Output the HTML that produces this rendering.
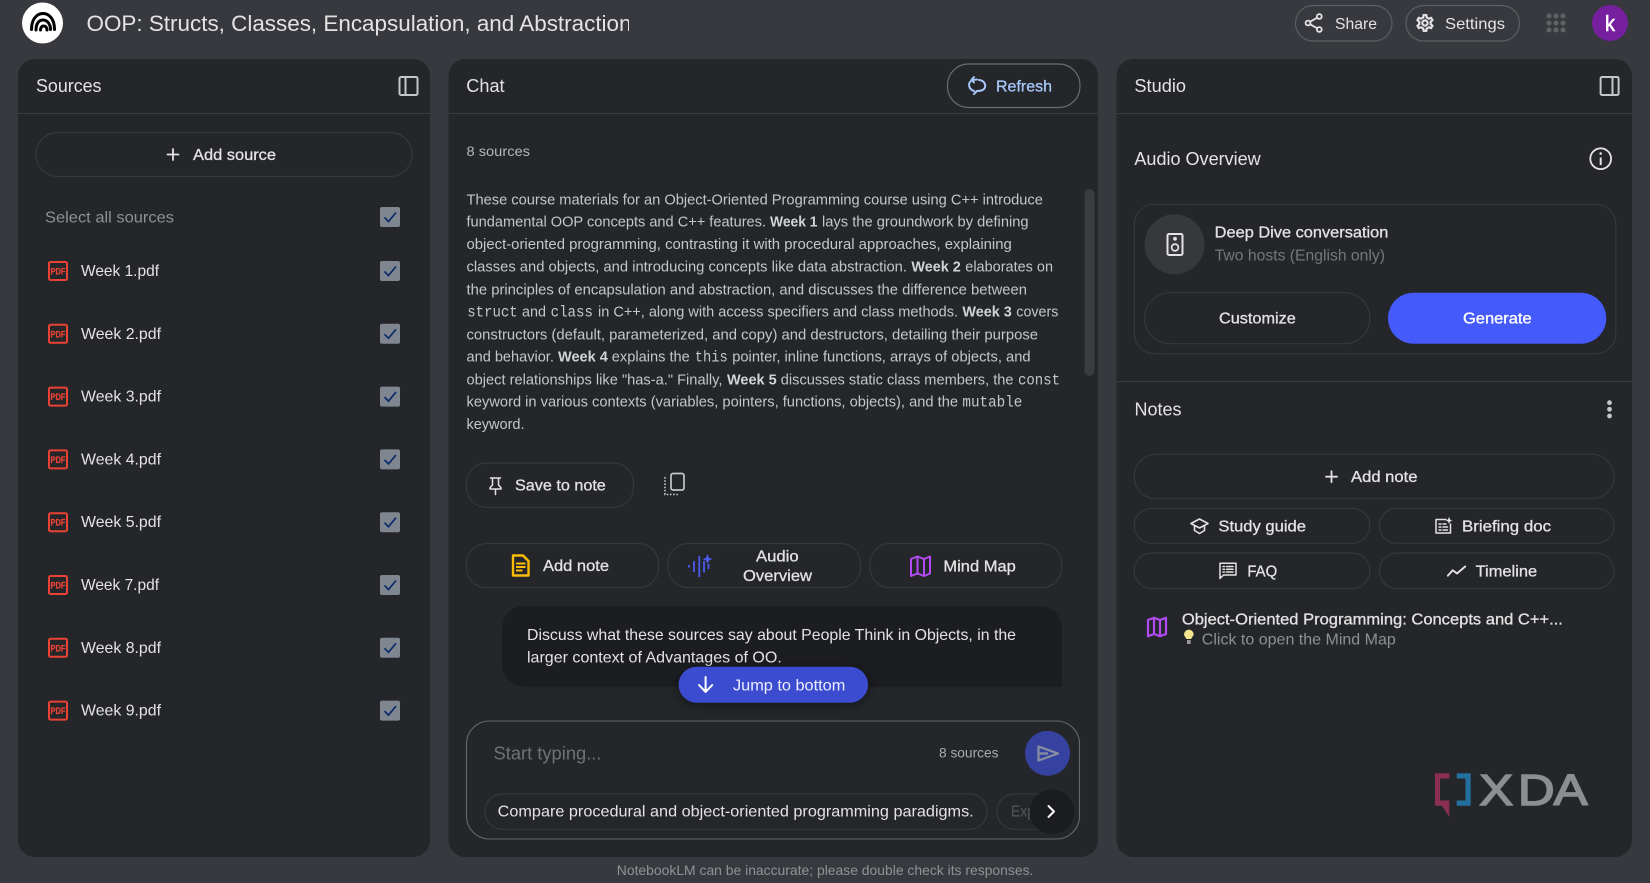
<!DOCTYPE html>
<html lang="en"><head><meta charset="utf-8"><title>NotebookLM</title>
<style>
html,body{margin:0;padding:0;background:#37393e;width:1650px;height:883px;overflow:hidden}
svg{display:block}
text{font-family:"Liberation Sans",sans-serif;fill:#e3e3e3;font-size:16px;white-space:pre}
.m{stroke:#e3e3e3;stroke-width:.3}
.h{font-size:18px}
.b{fill:#c4c6c9;font-size:15px}
.bb{fill:#d2d4d6;font-size:15px;font-weight:700}
.mo{fill:#c4c6c9;font-size:15.5px;font-family:"Liberation Mono",monospace}
.p{fill:none;stroke:#35373b;stroke-width:1.2}
.i{fill:none;stroke:#e3e3e3;stroke-width:1.8;stroke-linecap:round;stroke-linejoin:round}
.t{fill:none;stroke:#c4c7c5;stroke-width:2}
.pdf{fill:none;stroke:#ea4335;stroke-width:2}
.pt{fill:#ea4335;font-size:9.5px;font-weight:700;stroke:#ea4335;stroke-width:.2}
.c{fill:#80868f}
.k{fill:none;stroke:#0b2a6b;stroke-width:1.7}
.f{font-size:16px}
</style></head><body>
<svg xmlns="http://www.w3.org/2000/svg" width="1650" height="883" viewBox="0 0 1650 883">
<defs><clipPath id="tc"><rect x="80" y="0" width="549" height="50"/></clipPath></defs>
<rect width="1650" height="883" fill="#37393e"/>

<!-- Top bar -->
<circle cx="42.5" cy="23" r="20.5" fill="#fff"/>
<g fill="none" stroke="#000" stroke-width="3" stroke-linecap="round">
<path d="M31.5 29.5C31.5 19.5 36.5 13.5 43 13.5C49.5 13.5 54.5 19.5 54.5 29.5"/>
<path d="M36 30C36 23.5 39 20 43 20C47.5 20 50.5 24.5 50.5 29.5"/>
<path d="M40.5 30C40.5 27.5 42 26 43.5 26C45.5 26 47 27.5 47 30"/>
</g>
<g clip-path="url(#tc)"><text x="86.5" y="31" font-size="22" style="font-size:22px" textLength="545" lengthAdjust="spacingAndGlyphs">OOP: Structs, Classes, Encapsulation, and Abstraction</text></g>

<rect x="1295.5" y="5.5" width="96.5" height="35.5" rx="17.7" fill="none" stroke="#5c5e62" stroke-width="1.2"/>
<g class="i"><circle cx="1319.3" cy="16.5" r="2.4"/><circle cx="1308" cy="23" r="2.4"/><circle cx="1319.3" cy="29.5" r="2.4"/><path d="M1310 21.8L1317.2 17.7M1310 24.2L1317.2 28.3"/></g>
<text x="1335" y="29" textLength="42" lengthAdjust="spacingAndGlyphs">Share</text>
<rect x="1406" y="5.5" width="113.5" height="35.5" rx="17.7" fill="none" stroke="#5c5e62" stroke-width="1.2"/>
<path transform="translate(1414.4 12.4) scale(.88)" fill="#e3e3e3" stroke="#e3e3e3" stroke-width=".5" d="M19.43 12.98c.04-.32.07-.64.07-.98 0-.34-.03-.66-.07-.98l2.11-1.65c.19-.15.24-.42.12-.64l-2-3.46c-.09-.16-.26-.25-.44-.25-.06 0-.12.01-.17.03l-2.49 1c-.52-.4-1.08-.73-1.69-.98l-.38-2.65C14.46 2.18 14.25 2 14 2h-4c-.25 0-.46.18-.49.42l-.38 2.65c-.61.25-1.17.59-1.69.98l-2.49-1c-.06-.02-.12-.03-.18-.03-.17 0-.34.09-.43.25l-2 3.46c-.13.22-.07.49.12.64l2.11 1.65c-.04.32-.07.65-.07.98 0 .33.03.66.07.98l-2.11 1.65c-.19.15-.24.42-.12.64l2 3.46c.09.16.26.25.44.25.06 0 .12-.01.17-.03l2.49-1c.52.4 1.08.73 1.69.98l.38 2.65c.03.24.24.42.49.42h4c.25 0 .46-.18.49-.42l.38-2.65c.61-.25 1.17-.59 1.69-.98l2.49 1c.06.02.12.03.18.03.17 0 .34-.09.43-.25l2-3.46c.12-.22.07-.49-.12-.64l-2.11-1.65zm-1.98-1.71c.04.31.05.52.05.73 0 .21-.02.43-.05.73l-.14 1.13.89.7 1.08.84-.7 1.21-1.27-.51-1.04-.42-.9.68c-.43.32-.84.56-1.25.73l-1.06.43-.16 1.13-.2 1.35h-1.4l-.19-1.35-.16-1.13-1.06-.43c-.43-.18-.83-.41-1.23-.71l-.91-.7-1.06.43-1.27.51-.7-1.21 1.08-.84.89-.7-.14-1.13c-.03-.31-.05-.54-.05-.74s.02-.43.05-.73l.14-1.13-.89-.7-1.08-.84.7-1.21 1.27.51 1.04.42.9-.68c.43-.32.84-.56 1.25-.73l1.06-.43.16-1.13.2-1.35h1.39l.19 1.35.16 1.13 1.06.43c.43.18.83.41 1.23.71l.91.7 1.06-.43 1.27-.51.7 1.21-1.07.85-.89.7.14 1.13zM12 8c-2.21 0-4 1.79-4 4s1.79 4 4 4 4-1.79 4-4-1.79-4-4-4zm0 6c-1.1 0-2-.9-2-2s.9-2 2-2 2 .9 2 2-.9 2-2 2z"/>
<text x="1445" y="29" textLength="60" lengthAdjust="spacingAndGlyphs">Settings</text>
<g fill="#5f6165"><circle cx="1549" cy="16" r="2.5"/><circle cx="1556" cy="16" r="2.5"/><circle cx="1563" cy="16" r="2.5"/><circle cx="1549" cy="23" r="2.5"/><circle cx="1556" cy="23" r="2.5"/><circle cx="1563" cy="23" r="2.5"/><circle cx="1549" cy="30" r="2.5"/><circle cx="1556" cy="30" r="2.5"/><circle cx="1563" cy="30" r="2.5"/></g>
<circle cx="1610" cy="23" r="18" fill="#76209f"/>
<text x="1605" y="31" style="font-size:22px;fill:#fff;stroke:#fff;stroke-width:.6" textLength="10" lengthAdjust="spacingAndGlyphs">k</text>

<!-- Panels -->
<rect x="18" y="59" width="412" height="798" rx="17" fill="#24262a"/>
<rect x="448.5" y="59" width="649.5" height="798" rx="17" fill="#24262a"/>
<rect x="1116.5" y="59" width="515.5" height="798" rx="17" fill="#24262a"/>
<g fill="#3a3c40"><rect x="18" y="113" width="412" height="1"/><rect x="448.5" y="113" width="649.5" height="1"/><rect x="1116.5" y="113" width="515.5" height="1"/><rect x="1116.5" y="381" width="515.5" height="1"/></g>

<!-- Sources -->
<text class="h" x="36" y="92" textLength="65.5" lengthAdjust="spacingAndGlyphs">Sources</text>
<rect class="t" x="399.5" y="77" width="18" height="18" rx="1.5"/><path class="t" d="M405.5 77V95"/>
<rect class="p" x="36" y="132.5" width="376" height="44" rx="22"/>
<path class="i" d="M167.5 154.5H178.5M173 149V160"/>
<text class="m" x="193" y="160" textLength="83" lengthAdjust="spacingAndGlyphs">Add source</text>
<text x="45" y="222.5" style="fill:#8e9094" textLength="129" lengthAdjust="spacingAndGlyphs">Select all sources</text>
<rect class="c" x="380" y="207" width="20" height="20" rx="2"/><path class="k" d="M384.5 217.5L388.5 221.5L396 212.5"/>

<g id="r1"><rect class="pdf" x="49" y="262" width="18" height="18" rx="1.5"/><text class="pt" x="50.5" y="274.5" textLength="15" lengthAdjust="spacingAndGlyphs">PDF</text><text x="81" y="276" textLength="78" lengthAdjust="spacingAndGlyphs">Week 1.pdf</text><rect class="c" x="380" y="261" width="20" height="20" rx="2"/><path class="k" d="M384.5 271.5L388.5 275.5L396 266.5"/></g>
<g transform="translate(0 62.8)"><rect class="pdf" x="49" y="262" width="18" height="18" rx="1.5"/><text class="pt" x="50.5" y="274.5" textLength="15" lengthAdjust="spacingAndGlyphs">PDF</text><text x="81" y="276" textLength="80" lengthAdjust="spacingAndGlyphs">Week 2.pdf</text><rect class="c" x="380" y="261" width="20" height="20" rx="2"/><path class="k" d="M384.5 271.5L388.5 275.5L396 266.5"/></g>
<g transform="translate(0 125.6)"><rect class="pdf" x="49" y="262" width="18" height="18" rx="1.5"/><text class="pt" x="50.5" y="274.5" textLength="15" lengthAdjust="spacingAndGlyphs">PDF</text><text x="81" y="276" textLength="80" lengthAdjust="spacingAndGlyphs">Week 3.pdf</text><rect class="c" x="380" y="261" width="20" height="20" rx="2"/><path class="k" d="M384.5 271.5L388.5 275.5L396 266.5"/></g>
<g transform="translate(0 188.4)"><rect class="pdf" x="49" y="262" width="18" height="18" rx="1.5"/><text class="pt" x="50.5" y="274.5" textLength="15" lengthAdjust="spacingAndGlyphs">PDF</text><text x="81" y="276" textLength="80" lengthAdjust="spacingAndGlyphs">Week 4.pdf</text><rect class="c" x="380" y="261" width="20" height="20" rx="2"/><path class="k" d="M384.5 271.5L388.5 275.5L396 266.5"/></g>
<g transform="translate(0 251.2)"><rect class="pdf" x="49" y="262" width="18" height="18" rx="1.5"/><text class="pt" x="50.5" y="274.5" textLength="15" lengthAdjust="spacingAndGlyphs">PDF</text><text x="81" y="276" textLength="80" lengthAdjust="spacingAndGlyphs">Week 5.pdf</text><rect class="c" x="380" y="261" width="20" height="20" rx="2"/><path class="k" d="M384.5 271.5L388.5 275.5L396 266.5"/></g>
<g transform="translate(0 314)"><rect class="pdf" x="49" y="262" width="18" height="18" rx="1.5"/><text class="pt" x="50.5" y="274.5" textLength="15" lengthAdjust="spacingAndGlyphs">PDF</text><text x="81" y="276" textLength="78" lengthAdjust="spacingAndGlyphs">Week 7.pdf</text><rect class="c" x="380" y="261" width="20" height="20" rx="2"/><path class="k" d="M384.5 271.5L388.5 275.5L396 266.5"/></g>
<g transform="translate(0 376.8)"><rect class="pdf" x="49" y="262" width="18" height="18" rx="1.5"/><text class="pt" x="50.5" y="274.5" textLength="15" lengthAdjust="spacingAndGlyphs">PDF</text><text x="81" y="276" textLength="80" lengthAdjust="spacingAndGlyphs">Week 8.pdf</text><rect class="c" x="380" y="261" width="20" height="20" rx="2"/><path class="k" d="M384.5 271.5L388.5 275.5L396 266.5"/></g>
<g transform="translate(0 439.6)"><rect class="pdf" x="49" y="262" width="18" height="18" rx="1.5"/><text class="pt" x="50.5" y="274.5" textLength="15" lengthAdjust="spacingAndGlyphs">PDF</text><text x="81" y="276" textLength="80" lengthAdjust="spacingAndGlyphs">Week 9.pdf</text><rect class="c" x="380" y="261" width="20" height="20" rx="2"/><path class="k" d="M384.5 271.5L388.5 275.5L396 266.5"/></g>

<!-- Chat -->
<text class="h" x="466.3" y="92" textLength="38.3" lengthAdjust="spacingAndGlyphs">Chat</text>
<rect x="947.5" y="64" width="132.5" height="43.5" rx="21" fill="none" stroke="#6a6d70" stroke-width="1.2"/>
<g transform="translate(0 1)" fill="none" stroke="#a8c7fa" stroke-width="2" stroke-linecap="round" stroke-linejoin="round"><path d="M974 90C968 88 967.5 81 972.5 79L977 78.5M974 76L971.5 78.8L974 81.5"/><path d="M979 79C985 79.5 986.5 85 984 88C982 90 979 90 977 90L974 93"/></g>
<text x="996" y="91.5" style="fill:#a8c7fa;stroke:#a8c7fa;stroke-width:.3" textLength="56" lengthAdjust="spacingAndGlyphs">Refresh</text>
<text x="466.5" y="156" style="font-size:14px;fill:#b4b6b9" textLength="63.5" lengthAdjust="spacingAndGlyphs">8 sources</text>

<text class="b" x="466.5" y="204.3" textLength="576.4" lengthAdjust="spacingAndGlyphs">These course materials for an Object-Oriented Programming course using C++ introduce</text>
<text class="b" x="466.5" y="226.7" textLength="299.5" lengthAdjust="spacingAndGlyphs">fundamental OOP concepts and C++ features.</text>
<text class="bb" x="770" y="226.7" textLength="47.5" lengthAdjust="spacingAndGlyphs">Week 1</text>
<text class="b" x="822" y="226.7" textLength="206.6" lengthAdjust="spacingAndGlyphs">lays the groundwork by defining</text>
<text class="b" x="466.5" y="249" textLength="545.3" lengthAdjust="spacingAndGlyphs">object-oriented programming, contrasting it with procedural approaches, explaining</text>
<text class="b" x="466.5" y="271.7" textLength="440.5" lengthAdjust="spacingAndGlyphs">classes and objects, and introducing concepts like data abstraction.</text>
<text class="bb" x="911.4" y="271.7" textLength="49.4" lengthAdjust="spacingAndGlyphs">Week 2</text>
<text class="b" x="965.3" y="271.7" textLength="87.7" lengthAdjust="spacingAndGlyphs">elaborates on</text>
<text class="b" x="466.5" y="294.3" textLength="560.5" lengthAdjust="spacingAndGlyphs">the principles of encapsulation and abstraction, and discusses the difference between</text>
<text class="mo" x="467.3" y="316.7" textLength="50.3" lengthAdjust="spacingAndGlyphs">struct</text>
<text class="b" x="522" y="316.7" textLength="24" lengthAdjust="spacingAndGlyphs">and</text>
<text class="mo" x="550.6" y="316.7" textLength="42.4" lengthAdjust="spacingAndGlyphs">class</text>
<text class="b" x="598" y="316.7" textLength="360" lengthAdjust="spacingAndGlyphs">in C++, along with access specifiers and class methods.</text>
<text class="bb" x="962.4" y="316.7" textLength="49.4" lengthAdjust="spacingAndGlyphs">Week 3</text>
<text class="b" x="1016.3" y="316.7" textLength="42.1" lengthAdjust="spacingAndGlyphs">covers</text>
<text class="b" x="466.5" y="339.3" textLength="571.5" lengthAdjust="spacingAndGlyphs">constructors (default, parameterized, and copy) and destructors, detailing their purpose</text>
<text class="b" x="466.5" y="361.7" textLength="87.4" lengthAdjust="spacingAndGlyphs">and behavior.</text>
<text class="bb" x="558" y="361.7" textLength="49.8" lengthAdjust="spacingAndGlyphs">Week 4</text>
<text class="b" x="611.8" y="361.7" textLength="78" lengthAdjust="spacingAndGlyphs">explains the</text>
<text class="mo" x="694.7" y="361.7" textLength="33.1" lengthAdjust="spacingAndGlyphs">this</text>
<text class="b" x="732.2" y="361.7" textLength="298.4" lengthAdjust="spacingAndGlyphs">pointer, inline functions, arrays of objects, and</text>
<text class="b" x="466.5" y="384.3" textLength="255.9" lengthAdjust="spacingAndGlyphs">object relationships like "has-a." Finally,</text>
<text class="bb" x="727" y="384.3" textLength="49.7" lengthAdjust="spacingAndGlyphs">Week 5</text>
<text class="b" x="780.8" y="384.3" textLength="232.7" lengthAdjust="spacingAndGlyphs">discusses static class members, the</text>
<text class="mo" x="1018" y="384.3" textLength="42" lengthAdjust="spacingAndGlyphs">const</text>
<text class="b" x="466.5" y="406.7" textLength="491.5" lengthAdjust="spacingAndGlyphs">keyword in various contexts (variables, pointers, functions, objects), and the</text>
<text class="mo" x="962.4" y="406.7" textLength="60" lengthAdjust="spacingAndGlyphs">mutable</text>
<text class="b" x="466.5" y="429" textLength="58" lengthAdjust="spacingAndGlyphs">keyword.</text>
<rect x="1084.5" y="189" width="10" height="187" rx="5" fill="#3a3c40"/>

<rect class="p" x="466.5" y="463" width="167" height="44.3" rx="20"/>
<path class="i" style="stroke-width:1.5" d="M490.5 478H500.5M492.5 478V485L490 487.7V489H501V487.7L498.5 485V478M495.5 489V494.5"/>
<text class="m" x="515" y="490.5" textLength="90.8" lengthAdjust="spacingAndGlyphs">Save to note</text>
<rect x="671" y="473.5" width="13" height="16.5" rx="2" fill="none" stroke="#c4c7c5" stroke-width="1.7"/>
<path d="M665 477V494.5H679" fill="none" stroke="#c4c7c5" stroke-width="1.6" stroke-dasharray="1.6 1.6"/>

<rect class="p" x="466.5" y="543.5" width="192" height="44.2" rx="20"/>
<path d="M513 555.5H523L528.5 561V575.5H513Z" fill="none" stroke="#fbbc04" stroke-width="2.4" stroke-linejoin="round"/>
<path d="M516 563.5H525.5M516 567H525.5M516 570.5H522.5" stroke="#fbbc04" stroke-width="1.9"/>
<text class="m" x="543" y="571" textLength="66" lengthAdjust="spacingAndGlyphs">Add note</text>
<rect class="p" x="668" y="543.5" width="192.5" height="44.2" rx="20"/>
<g stroke="#4a5cf0" stroke-width="1.8"><path d="M689 565V567.5M694 561V572M699.3 556V577M704 561V572.5M708.5 564V569"/></g>
<path d="M707.5 554L709 557.8L712.5 559L709 560.5L707.5 564L706 560.5L702.5 559L706 557.8Z" fill="#4a5cf0"/>
<text class="m" x="756" y="561.3" textLength="42.6" lengthAdjust="spacingAndGlyphs">Audio</text>
<text class="m" x="743" y="581" textLength="69" lengthAdjust="spacingAndGlyphs">Overview</text>
<rect class="p" x="870" y="543.5" width="191.6" height="44.2" rx="20"/>
<path d="M911 559L917.5 556.5L924 559L930 556.5V573.5L924 576L917.5 573.5L911 576ZM917.5 556.5V573.5M924 559V576" fill="none" stroke="#b24bf3" stroke-width="2" stroke-linejoin="round"/>
<text class="m" x="943.4" y="571.7" textLength="72.4" lengthAdjust="spacingAndGlyphs">Mind Map</text>

<path d="M524 606H1040a22 22 0 0 1 22 22V686.7H524a22 22 0 0 1-22-22V628a22 22 0 0 1 22-22Z" fill="#1c1d21"/>
<text x="527" y="640" textLength="489" lengthAdjust="spacingAndGlyphs">Discuss what these sources say about People Think in Objects, in the</text>
<text x="527" y="662.7" textLength="254.8" lengthAdjust="spacingAndGlyphs">larger context of Advantages of OO.</text>
<rect x="678.6" y="666.7" width="189.4" height="36" rx="18" fill="#3b4cd1" style="filter:drop-shadow(0 2px 5px rgba(0,0,0,.45))"/>
<path d="M705.6 677V691.5M699 685L705.6 692L712.2 685" fill="none" stroke="#fff" stroke-width="2" stroke-linecap="round" stroke-linejoin="round"/>
<text x="733" y="690.7" style="fill:#eceefc" textLength="112.3" lengthAdjust="spacingAndGlyphs">Jump to bottom</text>

<rect x="466.5" y="721" width="613" height="118" rx="23" fill="none" stroke="#66696c" stroke-width="1.1"/>
<text x="493.5" y="759.3" style="font-size:18px;fill:#6f7175" textLength="108" lengthAdjust="spacingAndGlyphs">Start typing...</text>
<text x="939" y="757.7" style="font-size:14px;fill:#aaacb0" textLength="59.5" lengthAdjust="spacingAndGlyphs">8 sources</text>
<ellipse cx="1047.5" cy="753.3" rx="22.5" ry="22.4" fill="#36429f"/>
<path d="M1038.5 746.5L1058 753.5L1038.5 760.5ZM1038.5 753.5H1048" fill="none" stroke="#8a8ea3" stroke-width="2.2" stroke-linejoin="round"/>
<rect class="p" x="485" y="794" width="502" height="35.3" rx="17"/>
<text x="497.7" y="816.7" textLength="476" lengthAdjust="spacingAndGlyphs">Compare procedural and object-oriented programming paradigms.</text>
<rect class="p" x="997" y="794" width="62" height="35.3" rx="17"/>
<text x="1011" y="816.7" style="fill:#55575b" textLength="24" lengthAdjust="spacingAndGlyphs">Exp</text>
<circle cx="1052" cy="811.7" r="22.3" fill="#1b1c20"/>
<path d="M1048.5 806L1054 811.5L1048.5 817" fill="none" stroke="#fff" stroke-width="2" stroke-linecap="round" stroke-linejoin="round"/>
<text x="616.8" y="875" style="font-size:14px;fill:#909296" textLength="416.6" lengthAdjust="spacingAndGlyphs">NotebookLM can be inaccurate; please double check its responses.</text>

<!-- Studio -->
<text class="h" x="1134.4" y="92" textLength="51.6" lengthAdjust="spacingAndGlyphs">Studio</text>
<rect class="t" x="1600.6" y="77" width="18" height="18" rx="1.5"/><path class="t" d="M1612.5 77V95"/>
<text class="h" x="1134.4" y="165" textLength="126.3" lengthAdjust="spacingAndGlyphs">Audio Overview</text>
<circle cx="1600.7" cy="158.7" r="10.4" fill="none" stroke="#e3e3e3" stroke-width="1.8"/>
<path d="M1600.7 157.5V165" stroke="#e3e3e3" stroke-width="2"/><circle cx="1600.7" cy="153.5" r="1.3" fill="#e3e3e3"/>
<rect class="p" x="1134.4" y="204.3" width="481.4" height="149.4" rx="20"/>
<circle cx="1174.6" cy="244.3" r="30" fill="#36383c"/>
<rect x="1167.5" y="234" width="15" height="21" rx="1.5" fill="none" stroke="#e3e3e3" stroke-width="2"/>
<circle cx="1175" cy="238.8" r="1.9" fill="#e3e3e3"/><circle cx="1175" cy="247.5" r="3.4" fill="none" stroke="#e3e3e3" stroke-width="1.7"/>
<text class="m" x="1214.7" y="237.6" textLength="173.7" lengthAdjust="spacingAndGlyphs">Deep Dive conversation</text>
<text x="1214.7" y="260.7" style="fill:#74777b" textLength="170.3" lengthAdjust="spacingAndGlyphs">Two hosts (English only)</text>
<rect class="p" x="1144.6" y="292.7" width="225.2" height="51" rx="25.5"/>
<text class="m" x="1219" y="323.6" textLength="76.8" lengthAdjust="spacingAndGlyphs">Customize</text>
<rect x="1388" y="292.7" width="218.3" height="51" rx="25.5" fill="#445afa"/>
<text x="1463" y="323.6" style="fill:#fff;stroke:#fff;stroke-width:.35" textLength="68.6" lengthAdjust="spacingAndGlyphs">Generate</text>

<text class="h" x="1134.5" y="415.7" textLength="47" lengthAdjust="spacingAndGlyphs">Notes</text>
<g fill="#c4c6c9"><circle cx="1609.5" cy="402.7" r="2.4"/><circle cx="1609.5" cy="409.3" r="2.4"/><circle cx="1609.5" cy="416" r="2.4"/></g>
<rect class="p" x="1134.2" y="454.3" width="479.8" height="44.4" rx="22"/>
<path class="i" d="M1326 476.7H1337M1331.5 471.2V482.2"/>
<text class="m" x="1351" y="482" textLength="66.5" lengthAdjust="spacingAndGlyphs">Add note</text>
<rect class="p" x="1134.2" y="508.3" width="235.6" height="35" rx="17.5"/>
<path class="i" style="stroke-width:1.6" d="M1191 523.5L1199.5 519L1208 523.5L1199.5 528ZM1194.5 526V530.5L1199.5 533.5L1204.5 530.5V526"/>
<text class="m" x="1218.4" y="531.7" textLength="87.6" lengthAdjust="spacingAndGlyphs">Study guide</text>
<rect class="p" x="1379.3" y="508.3" width="234.7" height="35" rx="17.5"/>
<path class="i" style="stroke-width:1.5" d="M1446 519.5H1436V533H1450.5V524M1439 524H1441M1443 524H1446M1439 527H1441M1443 527H1447.5M1439 530H1441M1443 530H1447.5"/>
<path d="M1449 516.8L1450 519.5L1452.3 520.5L1450 521.5L1449 524L1448 521.5L1445.7 520.5L1448 519.5Z" fill="#e3e3e3"/>
<text class="m" x="1462" y="531.7" textLength="89" lengthAdjust="spacingAndGlyphs">Briefing doc</text>
<rect class="p" x="1134.2" y="553" width="235.6" height="35.7" rx="17.8"/>
<path class="i" style="stroke-width:1.5" d="M1220 563.2H1236V575H1223.5L1220 578.5ZM1223 566.5H1224.5M1226.5 566.5H1233M1223 569.3H1224.5M1226.5 569.3H1233M1223 572H1224.5M1226.5 572H1233"/>
<text class="m" x="1247.4" y="576.7" textLength="29.8" lengthAdjust="spacingAndGlyphs">FAQ</text>
<rect class="p" x="1379.3" y="553" width="234.7" height="35.7" rx="17.8"/>
<path class="i" style="stroke-width:1.9" d="M1447.8 575.7L1452.7 570.2L1457 573.5L1465.2 566.5"/>
<text class="m" x="1475.6" y="576.7" textLength="61.6" lengthAdjust="spacingAndGlyphs">Timeline</text>

<path d="M1148 620L1154 617.8L1160 620L1166 617.8V634L1160 636.2L1154 634L1148 636.2ZM1154 617.8V634M1160 620V636.2" fill="none" stroke="#b24bf3" stroke-width="2.2" stroke-linejoin="round"/>
<text class="m" x="1181.9" y="624.3" textLength="381" lengthAdjust="spacingAndGlyphs">Object-Oriented Programming: Concepts and C++...</text>
<path d="M1186.5 639C1184.5 636 1184 635 1184 634.5A4.8 4.8 0 0 1 1193.7 634.5C1193.7 635 1193 636 1191 639Z" fill="#f6e58d"/><rect x="1187" y="640" width="3.6" height="4" fill="#9a9a9a"/>
<text x="1201.8" y="644.3" style="fill:#8e9094" textLength="194" lengthAdjust="spacingAndGlyphs">Click to open the Mind Map</text>

<!-- XDA watermark -->
<path d="M1449.3 773.3H1435V805.7H1442L1449.3 817.3V800.5H1440V778.5H1449.3Z" fill="#8a2f4f"/>
<path d="M1456.7 773.3H1470.7V805.7H1456.7V800.5H1465.5V778.5H1456.7Z" fill="#236f9e"/>
<text transform="translate(1479.3 805) scale(1.17 1)" x="0 33 63.5" y="0" style="font-size:43.5px;fill:#8c8e91;stroke:#8c8e91;stroke-width:1.5">XDA</text>
</svg>
</body></html>
